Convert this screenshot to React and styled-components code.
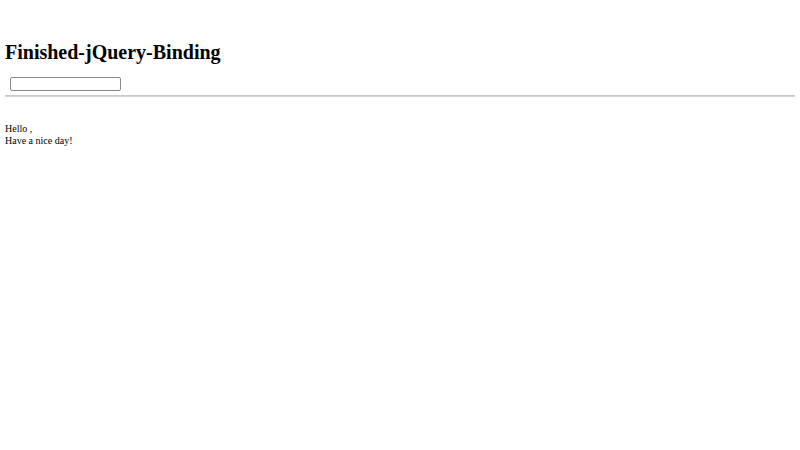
import React from "react";
import styled, { createGlobalStyle } from "styled-components";

const GlobalStyle = createGlobalStyle`
    html, body {
        margin: 0;
        padding: 0;
        background: #fff;
    }
    body {
        font-family: "Liberation Serif", "Times New Roman", serif;
        font-size: 10px;
        color: #000;
    }
`;

export default function App() {
    const [name, setName] = React.useState("");

    return (
        <Page>
            <GlobalStyle />
            <Title>Finished-jQuery-Binding</Title>
            <NameInput
                type="text"
                value={name}
                onChange={(e) => setName(e.target.value)}
            />
            <Divider />
            <Message>
                <Line>Hello {name},</Line>
                <Line>Have a nice day!</Line>
            </Message>
        </Page>
    );
}

const Page = styled.div`
    padding: 5px;
`;

const Title = styled.h1`
    font-family: "Liberation Serif", "Times New Roman", serif;
    font-size: 20px;
    font-weight: 700;
    line-height: 23px;
    margin: 36px 0 0 0;
`;

const NameInput = styled.input`
    display: block;
    box-sizing: border-box;
    width: 111px;
    height: 14px;
    margin: 13px 0 0 5px;
    padding: 0 2px;
    border: 1px solid #8a8a8a;
    border-radius: 2px;
    font-size: 10px;
    font-family: "Liberation Sans", Arial, sans-serif;
    outline: none;
`;

const Divider = styled.hr`
    height: 0;
    margin: 4px 0 0 0;
    border: none;
    border-top: 1px solid #c8c8c8;
    border-bottom: 1px solid #d4d4d4;
`;

const Message = styled.div`
    margin-top: 26px;
    line-height: 11.5px;
`;

const Line = styled.div`
    white-space: pre;
`;
